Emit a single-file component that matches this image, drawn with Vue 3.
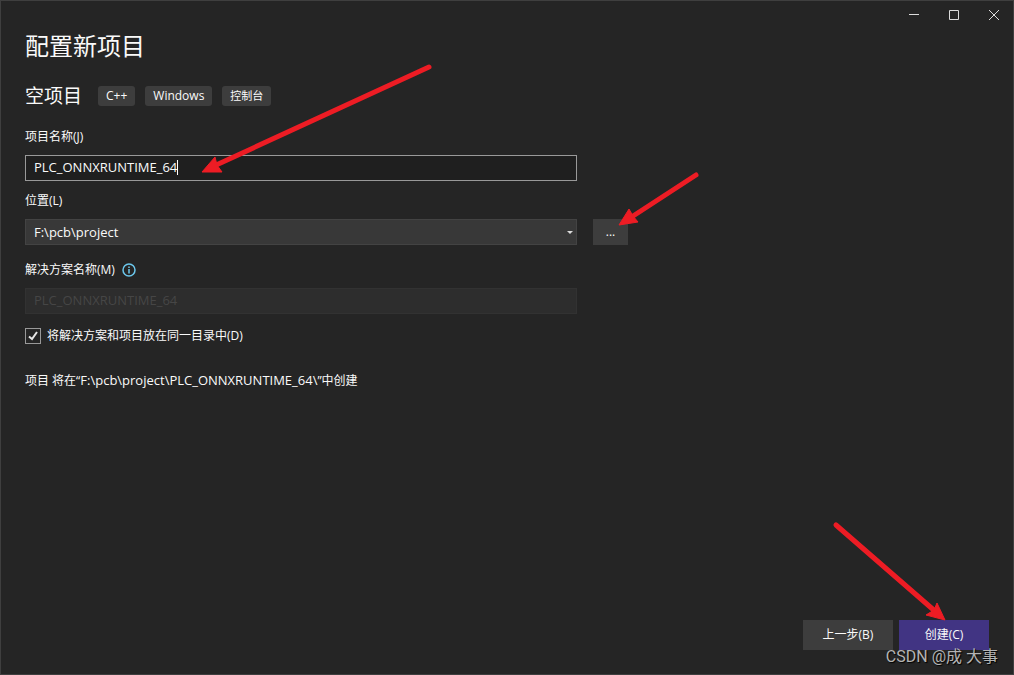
<template>
  <main class="window">
    <header class="title-bar">
      <button type="button" class="window-button" aria-label="最小化">
        <svg width="10" height="10" viewBox="0 0 10 10"><path d="M0 4.5H10" /></svg>
      </button>
      <button type="button" class="window-button" aria-label="最大化">
        <svg width="10" height="10" viewBox="0 0 10 10"><path d="M.5 .5H9.5V9.5H.5Z" /></svg>
      </button>
      <button type="button" class="window-button" aria-label="关闭">
        <svg width="10" height="10" viewBox="0 0 10 10"><path d="M0 0L10 10M10 0L0 10" /></svg>
      </button>
    </header>

    <form class="content" @submit.prevent>
      <h1>配置新项目</h1>
      <div class="template-row">
        <h2>空项目</h2>
        <ul class="tags">
          <li>C++</li>
          <li>Windows</li>
          <li class="cjk">控制台</li>
        </ul>
      </div>

      <div class="field">
        <label for="project-name">项目名称(J)</label>
        <div class="box">
          <input id="project-name" v-model="projectName" type="text" spellcheck="false" />
          <span class="caret" aria-hidden="true">{{ projectName }}</span>
        </div>
      </div>

      <div class="field">
        <label for="location">位置(L)</label>
        <div class="location-row">
          <div class="box">
            <select id="location" v-model="location">
              <option>F:\pcb\project</option>
            </select>
            <svg class="chevron" width="6" height="3" viewBox="0 0 6 3"><path d="M0 0H6L3 3Z" /></svg>
          </div>
          <button type="button" class="browse" aria-label="浏览">...</button>
        </div>
      </div>

      <div class="field">
        <div class="label-row">
          <label for="solution-name">解决方案名称(M)</label>
          <svg class="info" width="14" height="14" viewBox="0 0 14 14">
            <circle cx="7" cy="7" r="6" />
            <path d="M7 6V10.5M7 3.5V5" />
          </svg>
        </div>
        <div class="box">
          <input id="solution-name" :value="projectName" type="text" disabled />
        </div>
      </div>

      <div class="check-row">
        <input id="same-dir" v-model="sameDirectory" type="checkbox" />
        <svg class="tick" width="16" height="16" viewBox="0 0 16 16"><path d="M4 8.5L7 11L12 4" /></svg>
        <label for="same-dir">将解决方案和项目放在同一目录中(D)</label>
      </div>

      <p class="summary">项目 将在“<span class="path">{{ targetPath }}</span>”中创建</p>

      <footer class="actions">
        <button type="button">上一步(B)</button>
        <button type="submit" class="primary">创建(C)</button>
      </footer>
    </form>

    <svg class="arrows arrows-top" width="700" height="240" viewBox="0 0 700 240" aria-hidden="true">
      <path class="shaft" d="M429 67L214 166" />
      <path class="head" d="M202 172L215 157L217 165L222 172Z" />
      <path class="shaft" d="M696 175L630 218" />
      <path class="head" d="M619 225L629 209L633 216L638 222Z" />
    </svg>
    <svg class="arrows arrows-bottom" width="184" height="155" viewBox="830 520 184 155" aria-hidden="true">
      <path class="shaft" d="M836 525L936 612" />
      <path class="head" d="M945 620L937 603L934 610L926 615Z" />
    </svg>
    <span class="watermark">CSDN @成 大事</span>
  </main>
</template>

<script setup>
import { computed, ref } from 'vue'

const projectName = ref('PLC_ONNXRUNTIME_64')
const location = ref('F:\\pcb\\project')
const sameDirectory = ref(true)

const targetPath = computed(() => `${location.value}\\${projectName.value}\\`)
</script>

<style>
body {
  margin: 0;
  background: #252525;
}
</style>

<style scoped>
.window {
  position: relative;
  box-sizing: border-box;
  min-height: 100vh;
  display: flex;
  flex-direction: column;
  border: 1px solid #3f3f3f;
  background: #252525;
  color: #fafafa;
  font: 12px/20px "Open Sans", "Noto Sans CJK SC", sans-serif;
}

button,
input,
select {
  box-sizing: border-box;
  margin: 0;
  border: 0;
  border-radius: 0;
  outline: 0;
  color: inherit;
  font: inherit;
}

.title-bar {
  display: flex;
  justify-content: flex-end;
}

.window-button {
  width: 40px;
  height: 28px;
  padding: 0 0 0 2px;
  display: flex;
  align-items: center;
  justify-content: center;
  background: transparent;
}

.window-button svg {
  fill: none;
  stroke: #dcdcdc;
}

.content {
  flex: 1;
  display: flex;
  flex-direction: column;
  padding: 0 24px 24px;
}

h1,
h2,
p,
ul {
  margin: 0;
  padding: 0;
  font-weight: 400;
}

h1 {
  font-size: 24px;
  line-height: 34px;
}

.template-row {
  display: flex;
  align-items: center;
  gap: 16px;
  margin: 20px 0 18px;
}

h2 {
  font-size: 19px;
  line-height: 26px;
}

.tags {
  display: flex;
  gap: 10px;
  list-style: none;
}

.tags li {
  padding: 0 8px;
  border-radius: 3px;
  background: #3d3d3d;
}

.tags .cjk {
  font-size: 11px;
}

.field {
  display: flex;
  flex-direction: column;
  gap: 8px;
  margin-bottom: 10px;
}

.box {
  position: relative;
  width: 100%;
  max-width: 552px;
}

.box input,
.box select {
  display: block;
  width: 100%;
  height: 26px;
  padding: 0 8px;
  border: 1px solid #434343;
  background: #383838;
  font-size: 13px;
  appearance: none;
}

.box input {
  padding-bottom: 2px;
  border-color: #999;
  background: #1f1f1f;
}

.box input:disabled {
  border-color: #323232;
  background: #2d2d2d;
  color: #464646;
}

/* transparent copy of the text, so the caret stands at its end */
.caret {
  position: absolute;
  top: 2px;
  left: 9px;
  display: flex;
  align-items: center;
  color: transparent;
  font-size: 13px;
  white-space: nowrap;
  pointer-events: none;
}

.caret::after {
  content: '';
  width: 1px;
  height: 15px;
  background: #fff;
}

.location-row {
  display: flex;
  gap: 16px;
  margin-bottom: 5px;
}

.chevron {
  position: absolute;
  top: 12px;
  right: 4px;
  fill: #dcdcdc;
  pointer-events: none;
}

.browse {
  width: 35px;
  height: 26px;
  flex-shrink: 0;
  padding: 0;
  background: #3d3d3d;
}

.label-row {
  display: flex;
  align-items: center;
  gap: 7px;
}

.info {
  fill: none;
  stroke: #6cc7ec;
  stroke-width: 1.5;
}

.check-row {
  position: relative;
  display: flex;
  align-items: center;
  gap: 6px;
  margin-top: 2px;
}

.check-row input {
  width: 16px;
  height: 16px;
  border: 1px solid #999;
  background: #252525;
  appearance: none;
}

.tick {
  position: absolute;
  left: 0;
  fill: none;
  stroke: #e6e6e6;
  stroke-width: 2;
  pointer-events: none;
}

.check-row input:not(:checked) + .tick {
  display: none;
}

.summary {
  margin: 24px 0;
}

.path {
  font-size: 13px;
}

.actions {
  display: flex;
  justify-content: flex-end;
  gap: 6px;
  margin-top: auto;
}

.actions button {
  width: 90px;
  height: 30px;
  padding: 0;
  background: #3d3d3d;
}

.actions .primary {
  background: #413483;
}

.arrows {
  position: absolute;
  pointer-events: none;
}

.arrows-top {
  top: -1px;
  left: -1px;
}

.arrows-bottom {
  right: -1px;
  bottom: -1px;
}

.shaft {
  fill: none;
  stroke: #ed1c24;
  stroke-width: 5;
  stroke-linecap: round;
}

.head {
  fill: #ed1c24;
  stroke: #ed1c24;
}

.watermark {
  position: absolute;
  right: 15px;
  bottom: 7px;
  color: #b4b4b4;
  font: 16px/20px Roboto, "Noto Sans CJK SC", sans-serif;
  text-shadow: 1px 1px 1px #000;
}
</style>
